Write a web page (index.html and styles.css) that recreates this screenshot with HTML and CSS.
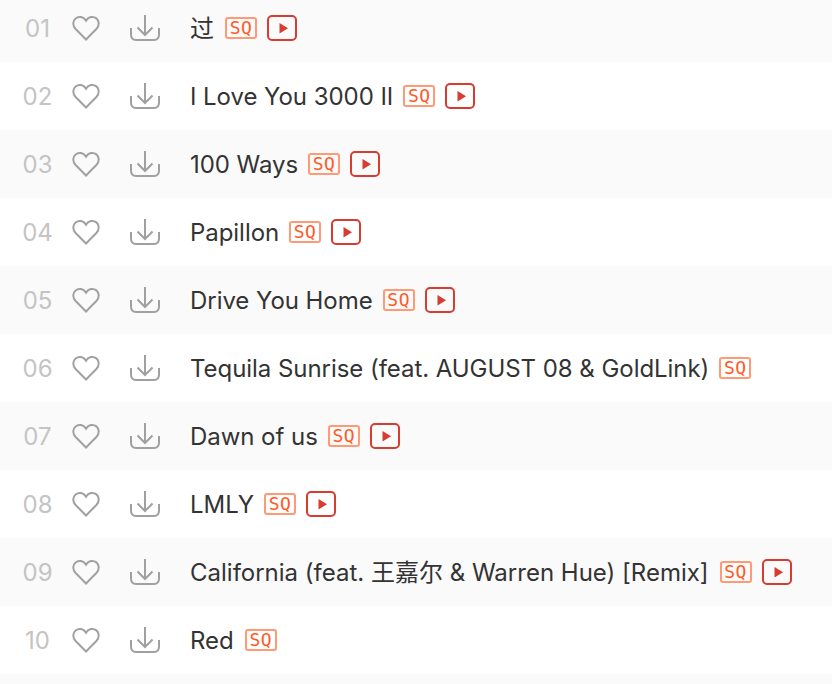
FILE: index.html
```html
<!DOCTYPE html>
<html>
<head>
    <title>Tracks</title>
    <link rel="stylesheet" href="styles.css">
</head>
<body>
    <svg class="defs" width="0" height="0">
        <symbol id="heart" viewBox="0 0 30 28">
            <path d="M15 25.5 L4.6 15 C1.4 11.6 1.6 6.9 4.6 4.4 C7.8 1.8 12.4 2.6 15 6.6 C17.6 2.6 22.2 1.8 25.4 4.4 C28.4 6.9 28.6 11.6 25.4 15 Z"/>
        </symbol>
        <symbol id="download" viewBox="0 0 32 28">
            <path d="M16 1 V21 M8.5 13.5 L16 21 L23.5 13.5"/>
            <path d="M2 14 V20.5 C2 24.2 4 26 7 26 H25 C28 26 30 24.2 30 20.5 V14"/>
        </symbol>
        <symbol id="play" viewBox="0 0 26 22">
            <path class="play-tri" d="M10.5 6 V16.5 L19 11.2 Z"/>
        </symbol>
    </svg>

    <div class="tracks">
        <div class="track first">
            <span class="num">01</span>
            <svg class="heart"><use href="#heart"/></svg>
            <svg class="download"><use href="#download"/></svg>
            <span class="title plain">过</span>
            <span class="sq">SQ</span>
            <span class="mv"><svg><use href="#play"/></svg></span>
        </div>
        <div class="track">
            <span class="num">02</span>
            <svg class="heart"><use href="#heart"/></svg>
            <svg class="download"><use href="#download"/></svg>
            <span class="title">I Love You 3000 II</span>
            <span class="sq">SQ</span>
            <span class="mv"><svg><use href="#play"/></svg></span>
        </div>
        <div class="track">
            <span class="num">03</span>
            <svg class="heart"><use href="#heart"/></svg>
            <svg class="download"><use href="#download"/></svg>
            <span class="title">100 Ways</span>
            <span class="sq">SQ</span>
            <span class="mv"><svg><use href="#play"/></svg></span>
        </div>
        <div class="track">
            <span class="num">04</span>
            <svg class="heart"><use href="#heart"/></svg>
            <svg class="download"><use href="#download"/></svg>
            <span class="title">Papillon</span>
            <span class="sq">SQ</span>
            <span class="mv"><svg><use href="#play"/></svg></span>
        </div>
        <div class="track">
            <span class="num">05</span>
            <svg class="heart"><use href="#heart"/></svg>
            <svg class="download"><use href="#download"/></svg>
            <span class="title">Drive You Home</span>
            <span class="sq">SQ</span>
            <span class="mv"><svg><use href="#play"/></svg></span>
        </div>
        <div class="track">
            <span class="num">06</span>
            <svg class="heart"><use href="#heart"/></svg>
            <svg class="download"><use href="#download"/></svg>
            <span class="title">Tequila Sunrise (feat. AUGUST 08 &amp; GoldLink)</span>
            <span class="sq">SQ</span>
        </div>
        <div class="track">
            <span class="num">07</span>
            <svg class="heart"><use href="#heart"/></svg>
            <svg class="download"><use href="#download"/></svg>
            <span class="title">Dawn of us</span>
            <span class="sq">SQ</span>
            <span class="mv"><svg><use href="#play"/></svg></span>
        </div>
        <div class="track">
            <span class="num">08</span>
            <svg class="heart"><use href="#heart"/></svg>
            <svg class="download"><use href="#download"/></svg>
            <span class="title">LMLY</span>
            <span class="sq">SQ</span>
            <span class="mv"><svg><use href="#play"/></svg></span>
        </div>
        <div class="track">
            <span class="num">09</span>
            <svg class="heart"><use href="#heart"/></svg>
            <svg class="download"><use href="#download"/></svg>
            <span class="title plain">California (feat. 王嘉尔 &amp; Warren Hue) [Remix]</span>
            <span class="sq">SQ</span>
            <span class="mv"><svg><use href="#play"/></svg></span>
        </div>
        <div class="track">
            <span class="num">10</span>
            <svg class="heart"><use href="#heart"/></svg>
            <svg class="download"><use href="#download"/></svg>
            <span class="title plain">Red</span>
            <span class="sq">SQ</span>
        </div>
        <div class="track last"></div>
    </div>
</body>
</html>
```

FILE: styles.css
```css
body {
    margin: 0;
    background-color: #fff;
    color: #333;
    font-family: Inter, "Noto Sans CJK SC", sans-serif;
}

.defs {
    display: block;
    height: 0;
}

.track {
    box-sizing: border-box;
    display: flex;
    align-items: center;
    height: 68px;
}

.track:nth-child(odd) {
    background-color: #fafafa;
}

/* la primera fila queda cortada por arriba */
.track.first {
    height: 62px;
    padding-bottom: 6px;
}

.track.last {
    height: 10px;
}

.num {
    width: 75px;
    flex: none;
    text-align: center;
    font-size: 24px;
    color: #c4c4c4;
}

.heart {
    width: 30px;
    height: 28px;
    flex: none;
    margin-left: -4px;
    fill: none;
    stroke: #a0a0a0;
    stroke-width: 2;
}

.download {
    width: 32px;
    height: 28px;
    flex: none;
    margin-left: 28px;
    fill: none;
    stroke: #a0a0a0;
    stroke-width: 2;
}

.title {
    margin-left: 29px;
    margin-right: 10px;
    padding-top: 1px;
    font-size: 24px;
    line-height: 30px;
    letter-spacing: -0.05px;
    white-space: nowrap;
}

.title.plain {
    margin-right: 11px;
    letter-spacing: 0;
}

.sq {
    box-sizing: border-box;
    width: 32px;
    height: 22px;
    flex: none;
    display: flex;
    align-items: center;
    justify-content: center;
    border: 2px solid #ff9a76;
    border-radius: 3px;
    font-family: "DejaVu Sans Mono", monospace;
    font-size: 18px;
    line-height: 1;
    letter-spacing: 0.5px;
    color: #ff5a26;
}

.mv {
    box-sizing: border-box;
    width: 30px;
    height: 26px;
    flex: none;
    margin-left: 10px;
    border: 2px solid #d63c30;
    border-radius: 5px;
}

.mv svg {
    display: block;
    width: 26px;
    height: 22px;
}

.play-tri {
    fill: #d63c30;
}
```
